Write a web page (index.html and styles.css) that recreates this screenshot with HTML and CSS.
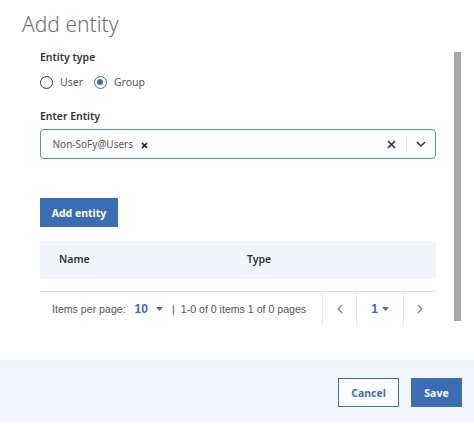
FILE: index.html
```html
<!DOCTYPE html>
<html lang="en">
<head>
<meta charset="utf-8">
<title>Add entity</title>
<link rel="stylesheet" href="styles.css">
</head>
<body>
<div class="modal">
  <header class="modal-header">
    <h2 class="modal-title">Add entity</h2>
  </header>
  <div class="modal-body">
    <div class="content">
      <div class="field">
        <div class="label">Entity type</div>
        <div class="radio-group">
          <label class="radio"><span class="ring"></span><span class="radio-text">User</span></label>
          <label class="radio checked"><span class="ring"><span class="dot"></span></span><span class="radio-text">Group</span></label>
        </div>
      </div>
      <div class="field field-entity">
        <div class="label">Enter Entity</div>
        <div class="combo">
          <div class="tags">
            <span class="tag">Non-SoFy@Users
              <svg class="tag-x" width="7" height="7" viewBox="0 0 7 7"><path d="M1 1L6 6M6 1L1 6" stroke="#1a1a1a" stroke-width="1.7" fill="none"/></svg>
            </span>
          </div>
          <div class="combo-actions">
            <svg class="clear" width="9" height="9" viewBox="0 0 9 9"><path d="M1 1L8 8M8 1L1 8" stroke="#333" stroke-width="1.7" fill="none"/></svg>
            <span class="divider"></span>
            <svg class="chev" width="10" height="6" viewBox="0 0 10 6"><path d="M1 1L5 5L9 1" stroke="#333" stroke-width="1.5" fill="none"/></svg>
          </div>
        </div>
      </div>
      <button class="btn btn-primary btn-add">Add entity</button>
      <div class="table">
        <div class="table-head">
          <div class="th th-name">Name</div>
          <div class="th th-type">Type</div>
        </div>
        <div class="table-body"></div>
        <div class="pagination">
          <div class="pg-left">
            <span class="pg-text">Items per page:</span>
            <span class="pg-select">10
              <svg width="7" height="4" viewBox="0 0 7 4"><path d="M0 0H7L3.5 4Z" fill="#3b6db5"/></svg>
            </span>
            <span class="pg-bar">|</span>
            <span class="pg-text">1-0 of 0 items 1 of 0 pages</span>
          </div>
          <div class="pg-cell pg-prev">
            <svg width="6" height="10" viewBox="0 0 6 10"><path d="M5 1L1 5L5 9" stroke="#777" stroke-width="1.1" fill="none"/></svg>
          </div>
          <div class="pg-cell pg-page">
            <span class="pg-num">1</span>
            <svg width="7" height="4" viewBox="0 0 7 4"><path d="M0 0H7L3.5 4Z" fill="#3b6db5"/></svg>
          </div>
          <div class="pg-cell pg-next">
            <svg width="6" height="10" viewBox="0 0 6 10"><path d="M1 1L5 5L1 9" stroke="#777" stroke-width="1.1" fill="none"/></svg>
          </div>
        </div>
      </div>
    </div>
    <div class="scrollbar"></div>
  </div>
  <footer class="modal-footer">
    <button class="btn btn-secondary">Cancel</button>
    <button class="btn btn-primary">Save</button>
  </footer>
</div>
</body>
</html>
```
FILE: styles.css
```css
* { box-sizing: border-box; }
html, body { margin: 0; padding: 0; background: #fff; }
body {
  font-family: "Noto Sans", "Open Sans", sans-serif;
  color: #333;
}
.modal {
  width: 474px;
  height: 424px;
  display: flex;
  flex-direction: column;
}
.modal-header { padding: 10px 0 0 22px; }
.modal-title {
  margin: 0;
  font-size: 21px;
  line-height: 28px;
  font-weight: 300;
  color: #707070;
}
.modal-body {
  flex: 1;
  display: flex;
  align-items: flex-start;
}
.content {
  width: 396px;
  margin-left: 40px;
  padding-top: 11px;
}
.scrollbar {
  width: 7px;
  height: 269px;
  margin: 14px 0 0 18px;
  background: #a9a9a9;
}
.label {
  font-size: 10.5px;
  line-height: 16px;
  font-weight: 600;
  color: #333;
}
.radio-group {
  display: flex;
  align-items: center;
  gap: 11px;
  height: 16px;
  margin-top: 9px;
}
.radio {
  display: flex;
  align-items: center;
  gap: 7px;
  font-size: 10.5px;
  line-height: 16px;
  color: #555;
}
.ring {
  width: 13px;
  height: 13px;
  border-radius: 50%;
  border: 1.5px solid #3a3a3a;
  display: flex;
  align-items: center;
  justify-content: center;
}
.radio.checked .ring { border-color: #3d6bb4; }
.dot {
  width: 6px;
  height: 6px;
  border-radius: 50%;
  background: #3d6bb4;
}
.field-entity { margin-top: 18px; }
.combo {
  margin-top: 5px;
  height: 30px;
  border: 1.5px solid #4d8fe0;
  border-radius: 4px;
  display: flex;
  align-items: center;
  justify-content: space-between;
  padding: 0 9px 0 11.5px;
}
.tag {
  display: flex;
  align-items: center;
  gap: 8px;
  font-size: 10px;
  color: #555;
}
.tag-x { margin-top: 2px; }
.combo-actions {
  display: flex;
  align-items: center;
}
.divider {
  width: 1px;
  height: 16px;
  background: #e4e4e4;
  margin: 0 9px 0 10px;
}
.btn {
  font-family: inherit;
  font-size: 10.5px;
  font-weight: 700;
  height: 29px;
  border-radius: 0;
  cursor: pointer;
}
.btn-primary {
  background: #3b6db5;
  color: #fff;
  border: none;
}
.btn-secondary {
  background: #fff;
  color: #3b6db5;
  border: 1.5px solid #3b6db5;
}
.btn-add {
  display: block;
  margin-top: 39px;
  width: 78px;
  padding: 0;
}
.table { margin-top: 14px; }
.table-head {
  height: 38px;
  background: #f2f5f9;
  display: flex;
  align-items: center;
}
.th {
  font-size: 10.5px;
  font-weight: 600;
  color: #333;
  margin-top: -3px;
}
.th-name { width: 207px; padding-left: 19px; }
.table-body {
  height: 13px;
  border-bottom: 1px solid #e2e2e2;
}
.pagination {
  height: 34px;
  display: flex;
  font-family: "Liberation Sans", Arial, sans-serif;
  font-size: 10.6px;
  color: #555;
}
.pg-left {
  flex: 1;
  display: flex;
  align-items: center;
  padding-left: 12px;
}
.pg-select {
  display: flex;
  align-items: center;
  gap: 8px;
  margin-left: 9px;
  font-weight: 700;
  color: #3b6db5;
  font-size: 12px;
}
.pg-bar { margin: 0 6px 0 9px; color: #555; }
.pg-cell {
  display: flex;
  align-items: center;
  justify-content: center;
  border-left: 1px solid #e8e8e8;
}
.pg-prev { width: 34px; }
.pg-page { width: 47px; gap: 4px; font-weight: 700; color: #3b6db5; font-size: 12px; }
.pg-next { width: 33px; }
.modal-footer {
  height: 62px;
  margin-bottom: 2px;
  background: #f3f6fa;
  box-shadow: inset 0 8px 0 #eff2f6;
  display: flex;
  justify-content: flex-end;
  align-items: center;
  gap: 12px;
  padding: 3px 12px 0 0;
}
.modal-footer .btn-secondary { width: 61px; }
.modal-footer .btn-primary { width: 51px; }
```
